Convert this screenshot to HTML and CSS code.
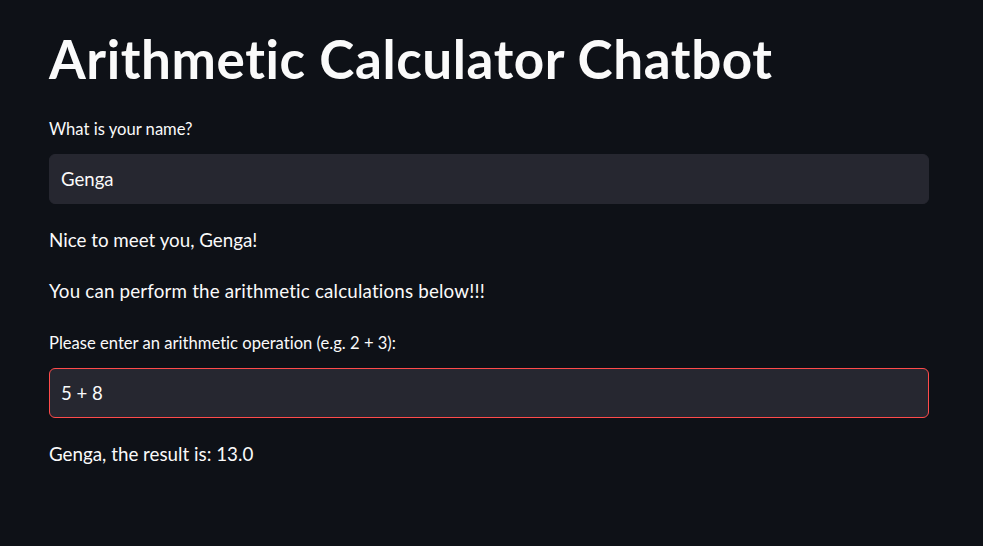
FILE: index.html
```html
<!DOCTYPE html>
<html lang="en">
<head>
<meta charset="utf-8">
<title>Arithmetic Calculator Chatbot</title>
<link rel="stylesheet" href="styles.css">
</head>
<body>
<main class="app">
  <h1 class="title">Arithmetic Calculator Chatbot</h1>
  <label class="field-label" for="name">What is your name?</label>
  <input class="text-input" id="name" type="text" value="Genga">
  <p class="msg msg-first">Nice to meet you, Genga!</p>
  <p class="msg msg-wide">You can perform the arithmetic calculations below!!!</p>
  <label class="field-label field-label-2" for="op">Please enter an arithmetic operation (e.g. 2 + 3):</label>
  <input class="text-input text-input-active" id="op" type="text" value="5 + 8">
  <p class="msg msg-first msg-result">Genga, the result is: 13.0</p>
</main>
</body>
</html>
```

FILE: styles.css
```css
html, body {
  margin: 0;
  padding: 0;
  background: #0e1117;
  height: 100%;
}

body {
  font-family: "Lato", "Noto Sans", sans-serif;
  font-variant-ligatures: none;
  color: #fafafa;
  overflow: hidden;
}

.app {
  display: flex;
  flex-direction: column;
  align-items: flex-start;
  width: 880px;
  padding: 27px 0 0 49px;
}

.title {
  margin: 0;
  font-size: 53px;
  line-height: 64px;
  font-weight: 700;
  letter-spacing: 0.6px;
  color: #fafafa;
}

.field-label {
  display: block;
  margin-top: 28px;
  font-size: 16.6px;
  line-height: 20px;
  color: #fafafa;
}

.field-label-2 {
  margin-top: 28px;
}

.text-input {
  box-sizing: border-box;
  margin-top: 15px;
  width: 880px;
  height: 50px;
  padding: 0 11px;
  background: #262730;
  border: 1px solid #262730;
  border-radius: 6px;
  color: #fafafa;
  font-family: inherit;
  font-size: 18.6px;
  font-variant-ligatures: none;
  outline: none;
}

.text-input-active {
  border-color: #ff4b4b;
}

.msg {
  margin: 23px 0 0;
  font-size: 18.8px;
  line-height: 28px;
}

.msg-wide {
  letter-spacing: 0.17px;
}

.msg-first {
  margin-top: 22px;
}

.msg-result {
  margin-top: 22px;
}
```
